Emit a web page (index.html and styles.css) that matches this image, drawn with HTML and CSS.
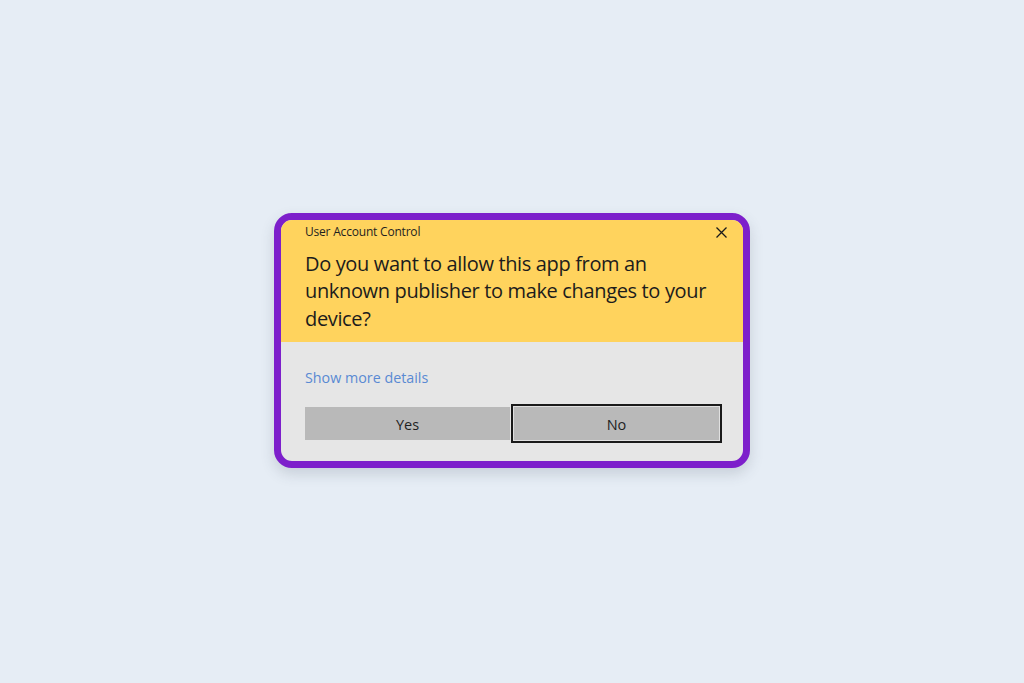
FILE: index.html
```html
<!DOCTYPE html>
<html lang="en">
<head>
<meta charset="utf-8">
<title>User Account Control</title>
<link rel="stylesheet" href="styles.css">
</head>
<body>
<div class="dialog">
  <div class="header">
    <div class="titlebar">
      <span class="title">User Account Control</span>
      <span class="close" aria-label="Close">
        <svg width="11" height="11" viewBox="0 0 11 11"><path d="M0.5 0.5 L10.5 10.5 M10.5 0.5 L0.5 10.5" stroke="#1a1a1a" stroke-width="1.3" fill="none"/></svg>
      </span>
    </div>
    <h1 class="question">Do you want to allow this app from an unknown publisher to make changes to your device?</h1>
  </div>
  <div class="body">
    <a class="details" href="#">Show more details</a>
    <div class="buttons">
      <button class="btn">Yes</button>
      <button class="btn btn-focus">No</button>
    </div>
  </div>
</div>
</body>
</html>
```
FILE: styles.css
```css
html, body {
  margin: 0;
  padding: 0;
}
body {
  background: #e6edf5;
  height: 683px;
  font-family: "Open Sans", "Noto Sans", sans-serif;
  padding-top: 213px;
  box-sizing: border-box;
}
.dialog {
  width: 462px;
  margin: 0 auto;
  border: 7px solid #7d1fcb;
  border-radius: 18px;
  overflow: hidden;
  box-shadow: 0 6px 14px rgba(60, 70, 90, 0.18);
  background: #e6e6e6;
}
.header {
  background: #ffd35d;
  height: 122px;
  box-sizing: border-box;
  padding: 4px 16px 0 24px;
}
.titlebar {
  display: flex;
  justify-content: space-between;
  align-items: center;
  height: 16px;
}
.title {
  font-size: 12px;
  line-height: 16px;
  letter-spacing: -0.2px;
  color: #1f1f1f;
}
.close {
  display: flex;
  width: 11px;
  height: 11px;
  margin-top: 1px;
}
.question {
  margin: 9.5px 0 0 0;
  font-size: 20px;
  line-height: 27.5px;
  font-weight: 400;
  letter-spacing: -0.35px;
  color: #1c1c1c;
}
.body {
  padding: 26px 24px 21px 24px;
}
.details {
  display: block;
  font-size: 14.3px;
  line-height: 20px;
  color: #5a8ad3;
  text-decoration: none;
}
.buttons {
  margin-top: 19px;
  display: flex;
  gap: 4px;
}
.btn {
  flex: 1;
  height: 33px;
  border: none;
  background: #b9b9b9;
  font-family: "Open Sans", "Noto Sans", sans-serif;
  font-size: 14.5px;
  color: #1f1f1f;
  padding: 2px 0 0 0;
}
.btn-focus {
  outline: 2px solid #1a1a1a;
  outline-offset: 1px;
  box-shadow: 0 0 0 1px #e0e0e0;
}
```
